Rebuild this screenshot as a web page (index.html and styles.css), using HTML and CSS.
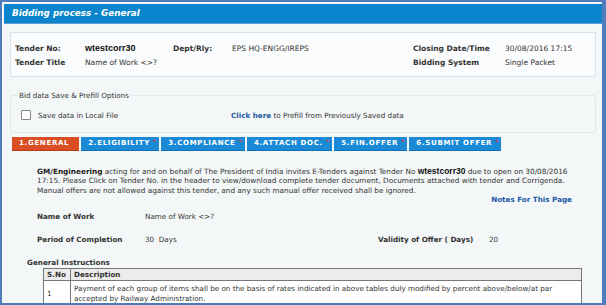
FILE: index.html
```html
<!DOCTYPE html>
<html lang="en">
<head>
    <meta charset="UTF-8">
    <title>Bidding process - General</title>
    <link rel="stylesheet" href="styles.css">
</head>
<body>
    <div class="frame">
        <div class="page-title">Bidding process - General</div>
        <div class="content">
            <table class="info-box">
                <tr>
                    <td class="lbl c1">Tender No:</td>
                    <td class="c2"><span class="tender-no">wtestcorr30</span></td>
                    <td class="lbl c3">Dept/Rly:</td>
                    <td class="c4">EPS HQ-ENGG/IREPS</td>
                    <td class="lbl c5">Closing Date/Time</td>
                    <td class="c6">30/08/2016 17:15</td>
                </tr>
                <tr>
                    <td class="lbl">Tender Title</td>
                    <td>Name of Work &lt;&gt;?</td>
                    <td></td>
                    <td></td>
                    <td class="lbl">Bidding System</td>
                    <td>Single Packet</td>
                </tr>
            </table>

            <fieldset class="prefill">
                <legend>Bid data Save &amp; Prefill Options</legend>
                <div class="prefill-row">
                    <label class="save-local"><span class="checkbox"></span>Save data in Local File</label>
                    <span class="prefill-link"><a href="#">Click here</a> to Prefill from Previously Saved data</span>
                </div>
            </fieldset>

            <ul class="tabs">
                <li class="active">1.GENERAL</li>
                <li>2.ELIGIBILITY <span class="req">*</span></li>
                <li>3.COMPLIANCE <span class="req">*</span></li>
                <li>4.ATTACH DOC. <span class="req">*</span></li>
                <li>5.FIN.OFFER <span class="req">*</span></li>
                <li>6.SUBMIT OFFER <span class="req">*</span></li>
            </ul>

            <p class="intro"><strong>GM/Engineering</strong> acting for and on behalf of The President of India invites E-Tenders against Tender No <span class="tender-no">wtestcorr30</span> due to open on 30/08/2016 17:15. Please Click on Tender No. in the header to view/download complete tender document, Documents attached with tender and Corrigenda. Manual offers are not allowed against this tender, and any such manual offer received shall be ignored.</p>
            <div class="notes"><a href="#">Notes For This Page</a></div>

            <div class="field-row">
                <span class="lbl name">Name of Work</span>
                <span class="val">Name of Work &lt;&gt;?</span>
            </div>
            <div class="field-row">
                <span class="lbl name">Period of Completion</span>
                <span class="val days">30&nbsp; Days</span>
                <span class="lbl validity">Validity of Offer ( Days)</span>
                <span class="val">20</span>
            </div>

            <div class="section-title">General Instructions</div>
            <table class="instructions">
                <tr>
                    <th class="sno">S.No</th>
                    <th>Description</th>
                </tr>
                <tr>
                    <td class="num">1</td>
                    <td>Payment of each group of items shall be on the basis of rates indicated in above tables duly modified by percent above/below/at par accepted by Railway Administration.</td>
                </tr>
            </table>
        </div>
    </div>
</body>
</html>
```

FILE: styles.css
```css
body {
    margin: 0;
    padding: 0;
    font-family: 'DejaVu Sans', Verdana, sans-serif;
    font-size: 7.2px;
    color: #333;
    background-color: #f4f7f7;
}
.frame {
    box-sizing: border-box;
    width: 606px;
    height: 305px;
    overflow: hidden;
    border: 2px solid #4f7dbb;
    border-right-width: 4px;
    padding: 2px 0 0 2px;
    background-color: #f4f7f7;
}
.page-title {
    background-color: #0a84cc;
    color: white;
    font-weight: bold;
    font-style: italic;
    font-size: 8.8px;
    height: 19px;
    line-height: 19px;
    padding-left: 8px;
    border-bottom: 1px solid #5a9fcf;
}
.content {
    padding: 8px 6px 0 6px;
}
.lbl {
    font-weight: bold;
    color: #333;
}
.tender-no {
    font-family: 'Liberation Sans', Arial, sans-serif;
    font-weight: bold;
    font-size: 9px;
    line-height: 1;
    color: #111;
}
.info-box {
    width: 100%;
    border: 1px solid #d8e3ea;
    background-color: #fbfcfd;
    border-collapse: collapse;
    font-size: 7.5px;
}
.info-box td {
    padding: 0 0 0 4px;
    height: 14px;
    vertical-align: middle;
}
.info-box tr:first-child td {
    padding-top: 8px;
}
.info-box tr:last-child td {
    padding-bottom: 7px;
}
.info-box .c1 { width: 66px; }
.info-box .c2 { width: 84px; }
.info-box .c3 { width: 55px; }
.info-box .c4 { width: 177px; }
.info-box .c5 { width: 88px; }
.prefill {
    margin: 14px 0 0 0;
    padding: 8px 10px 10px 10px;
    border: 1px solid #e3e8eb;
    border-radius: 2px;
}
.prefill legend {
    padding: 0 2px;
    margin-left: -4px;
}
.prefill-row {
    display: flex;
    align-items: center;
    height: 14px;
}
.save-local {
    display: flex;
    align-items: center;
    width: 210px;
}
.checkbox {
    display: inline-block;
    width: 8px;
    height: 8px;
    border: 1px solid #888;
    border-radius: 1px;
    background-color: white;
    margin-right: 7px;
}
.prefill-link a {
    color: #1d5aa5;
    font-weight: bold;
    text-decoration: none;
}
.tabs {
    list-style: none;
    margin: 4px 0 0 2px;
    padding: 0;
    display: flex;
    gap: 2px;
}
.tabs li {
    background-color: #1a8ad6;
    color: white;
    font-weight: bold;
    font-size: 7px;
    letter-spacing: 0.7px;
    height: 13px;
    line-height: 13px;
    padding: 0 3px 0 7px;
    border-bottom: 1px solid #0c6fb4;
}
.tabs li.active {
    background-color: #d94f23;
    border-bottom-color: #b33a14;
    padding-right: 10px;
}
.tabs .req {
    color: #e23c3c;
    font-size: 6px;
    vertical-align: top;
    line-height: 9px;
    letter-spacing: 0;
}
.intro {
    font-size: 7.3px;
    margin: 16px 20px 0 27px;
    line-height: 9.4px;
}
.intro .tender-no {
    font-size: 8.5px;
}
.intro strong {
    color: #222;
}
.notes {
    text-align: right;
    margin: 0 24px 0 0;
}
.notes a {
    color: #1d5aa5;
    font-weight: bold;
    text-decoration: none;
}
.field-row {
    display: flex;
    margin: 8px 0 0 27px;
    height: 10px;
}
.field-row + .field-row {
    margin-top: 13px;
}
.field-row .name {
    width: 108px;
}
.field-row .days {
    width: 233px;
}
.field-row .validity {
    width: 111px;
}
.section-title {
    font-weight: bold;
    margin: 13px 0 0 17px;
}
.instructions {
    margin: 1px 0 0 33px;
    width: 539px;
    border-collapse: collapse;
    background-color: white;
}
.instructions th, .instructions td {
    border: 1px solid #777;
    text-align: left;
    padding: 1px 3px;
    vertical-align: top;
}
.instructions td {
    padding-top: 3px;
    line-height: 10px;
}
.instructions td.num {
    vertical-align: middle;
}
.instructions th {
    background-color: #ececec;
    height: 9px;
}
.instructions .sno {
    width: 20px;
}
```
